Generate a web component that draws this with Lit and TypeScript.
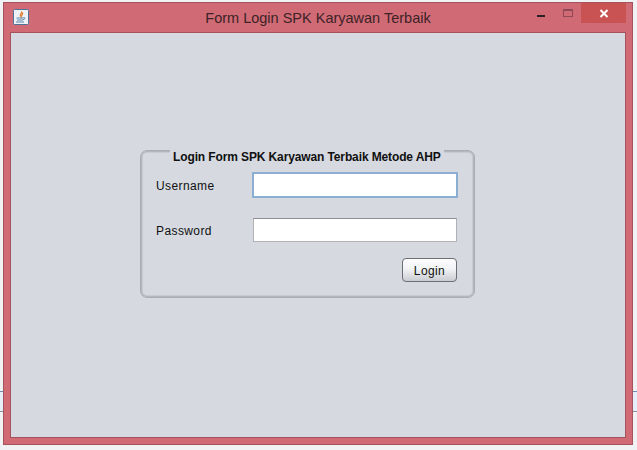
import { LitElement, html, css } from "lit";
import { customElement } from "lit/decorators.js";

@customElement("app-root")
export class AppRoot extends LitElement {
  static styles = css`
    :host {
      display: block;
      position: relative;
      width: 637px;
      height: 450px;
      box-sizing: border-box;
      padding: 2px 4px 5px 3px;
      overflow: hidden;
      background: #f1f2f4;
      font-family: "Liberation Sans", Arial, sans-serif;
    }
    .stripe {
      position: absolute;
      left: 0;
      right: 0;
      top: 391px;
      height: 19px;
      background: #e6eefa;
      border-top: 1px solid #6b8fb5;
      border-bottom: 1px solid #8a949e;
    }
    .window {
      position: relative;
      height: 100%;
      box-sizing: border-box;
      display: flex;
      flex-direction: column;
      background: #d06b76;
      border: 1px solid #a5525c;
      padding: 0 6px 6px 6px;
    }
    .titlebar {
      height: 29px;
      flex: none;
      position: relative;
      display: flex;
      align-items: center;
      justify-content: center;
    }
    .title {
      font-family: "Liberation Sans", Arial, sans-serif;
      font-size: 14.5px;
      color: #3d2226;
    }
    .app-icon {
      position: absolute;
      left: 3px;
      top: 6px;
      width: 16px;
      height: 16px;
    }
    .controls {
      position: absolute;
      right: 0;
      top: 0;
      display: flex;
      align-items: flex-start;
    }
    .min {
      width: 8px;
      height: 2px;
      background: #2b2024;
      margin: 12px 18px 0 0;
    }
    .max {
      width: 8px;
      height: 5px;
      border: 1px solid #8f4a55;
      border-top-width: 2px;
      margin: 6px 8px 0 0;
    }
    .close {
      width: 45px;
      height: 20px;
      background: #c85352;
      display: flex;
      align-items: center;
      justify-content: center;
    }
    .content {
      flex: 1;
      background: #d6d9e0;
      border: 1px solid #a5525c;
      padding-top: 117px;
      padding-left: 129px;
    }
    .group {
      position: relative;
      width: 335px;
      height: 148px;
      box-sizing: border-box;
      border: 1px solid #aaadb2;
      border-radius: 7px;
      box-shadow: inset 0 0 0 1px #b4b7bc, inset 0 0 0 2px #c8cbd1;
      padding: 22px 0 0 15px;
    }
    .legend {
      position: absolute;
      left: 29px;
      top: -1px;
      height: 12px;
      padding: 0 3px;
      background: #d6d9e0;
      font-size: 12px;
      font-weight: bold;
      letter-spacing: -0.12px;
      color: #101010;
      line-height: 14px;
      white-space: nowrap;
    }
    .form {
      display: grid;
      grid-template-columns: 97px 204px;
      grid-template-rows: 24px 24px 24px;
      row-gap: 21px;
      align-items: center;
    }
    label {
      font-size: 12px;
      letter-spacing: 0.4px;
      color: #111;
      padding-top: 2px;
    }
    .input {
      display: block;
      align-self: stretch;
      box-sizing: border-box;
      background: #fff;
      border: 1px solid #b0b2b6;
      border-top-color: #8b8d91;
    }
    .focus {
      border: 2px solid #8bafd3;
      margin: -1px;
    }
    .actions {
      grid-column: 2;
      justify-self: end;
      margin-top: -5px;
      align-self: start;
    }
    button {
      display: block;
      width: 55px;
      height: 24px;
      box-sizing: border-box;
      border: 1px solid #6b6e73;
      border-radius: 4px;
      background: linear-gradient(#fdfdfe, #f2f3f5 45%, #c9ccd2);
      font: 12px "Liberation Sans", Arial, sans-serif;
      letter-spacing: 0.4px;
      color: #111;
      padding: 1px 0 0;
    }
  `;

  render() {
    return html`
      <div class="stripe"></div>
      <div class="window">
        <div class="titlebar">
          <svg class="app-icon" viewBox="0 0 16 16">
            <rect x="0.5" y="0.5" width="15" height="15" rx="1" fill="#eef2f6" stroke="#4f7396"></rect>
            <path d="M8.5 2.5c1 1.5-1.6 2.4-1.2 4 .1.6.5 1 .8 1.3-.2-1.3 2.4-2.3 1.4-4.3" fill="none" stroke="#e2792b" stroke-width="1.2"></path>
            <path d="M3.5 9h7M4 11h6M3 13h8" stroke="#5b86ad" stroke-width="1"></path>
            <path d="M10.5 8.5c2-.5 2 2-.5 2" fill="none" stroke="#5b86ad"></path>
          </svg>
          <span class="title">Form Login SPK Karyawan Terbaik</span>
          <div class="controls">
            <div class="min"></div>
            <div class="max"></div>
            <div class="close">
              <svg width="10" height="9" viewBox="0 0 10 9">
                <path d="M1.5 1l7 7M8.5 1l-7 7" stroke="#fff" stroke-width="2"></path>
              </svg>
            </div>
          </div>
        </div>
        <div class="content">
          <div class="group">
            <div class="legend">Login Form SPK Karyawan Terbaik Metode AHP</div>
            <div class="form">
              <label>Username</label>
              <span class="input focus"></span>
              <label>Password</label>
              <span class="input"></span>
              <div class="actions"><button>Login</button></div>
            </div>
          </div>
        </div>
      </div>
    `;
  }
}
